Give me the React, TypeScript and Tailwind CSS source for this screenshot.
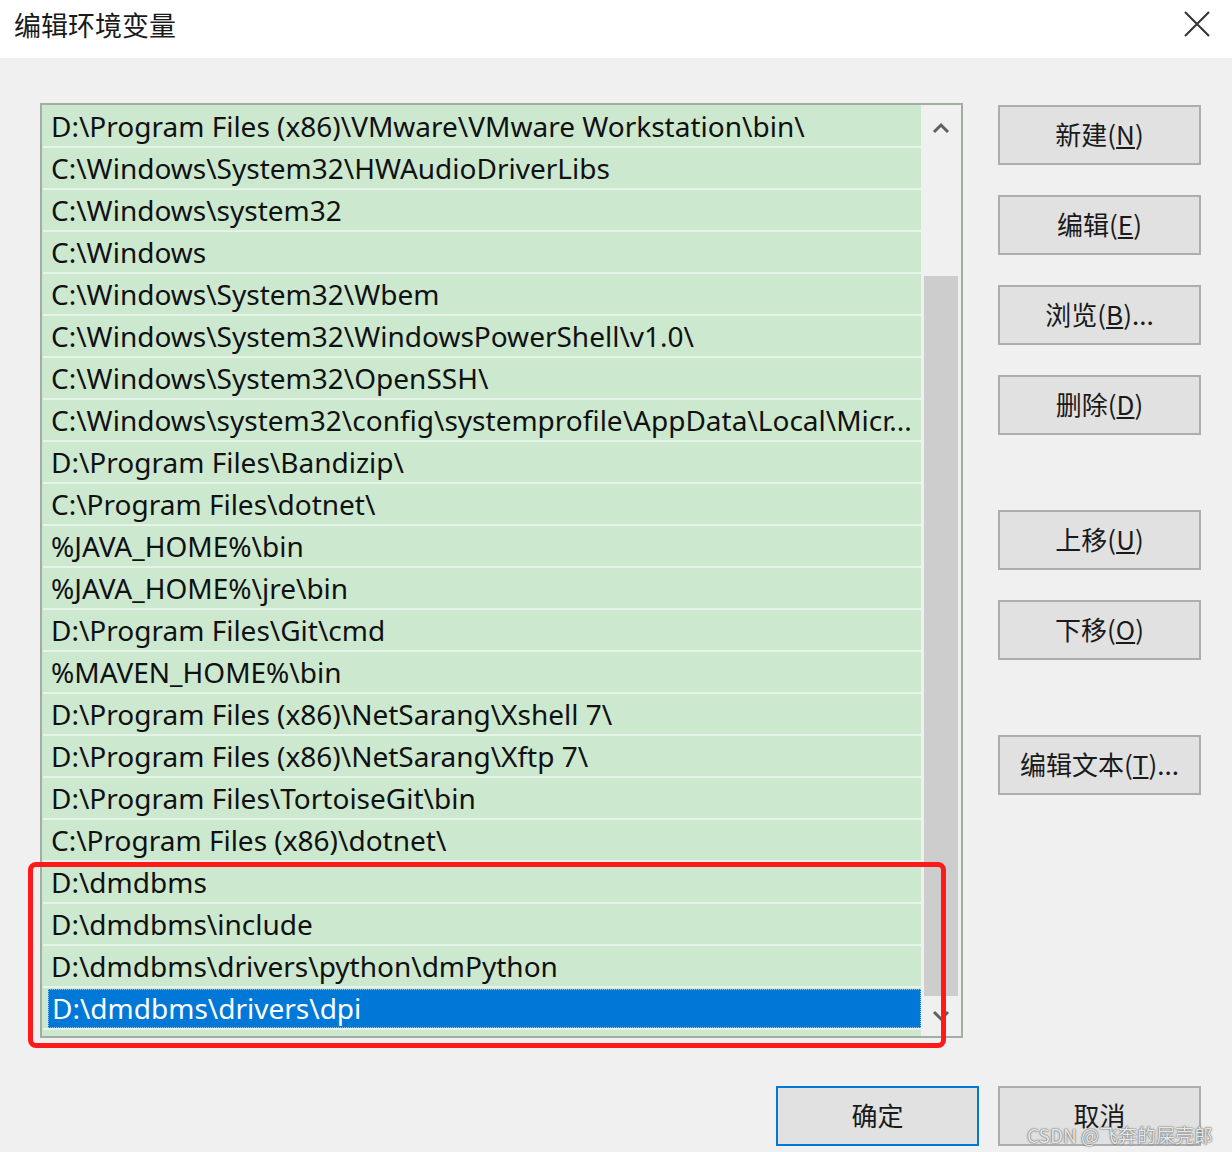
import { ReactNode } from "react";

const paths = [
  "D:\\Program Files (x86)\\VMware\\VMware Workstation\\bin\\",
  "C:\\Windows\\System32\\HWAudioDriverLibs",
  "C:\\Windows\\system32",
  "C:\\Windows",
  "C:\\Windows\\System32\\Wbem",
  "C:\\Windows\\System32\\WindowsPowerShell\\v1.0\\",
  "C:\\Windows\\System32\\OpenSSH\\",
  "C:\\Windows\\system32\\config\\systemprofile\\AppData\\Local\\Micr...",
  "D:\\Program Files\\Bandizip\\",
  "C:\\Program Files\\dotnet\\",
  "%JAVA_HOME%\\bin",
  "%JAVA_HOME%\\jre\\bin",
  "D:\\Program Files\\Git\\cmd",
  "%MAVEN_HOME%\\bin",
  "D:\\Program Files (x86)\\NetSarang\\Xshell 7\\",
  "D:\\Program Files (x86)\\NetSarang\\Xftp 7\\",
  "D:\\Program Files\\TortoiseGit\\bin",
  "C:\\Program Files (x86)\\dotnet\\",
  "D:\\dmdbms",
  "D:\\dmdbms\\include",
  "D:\\dmdbms\\drivers\\python\\dmPython",
  "D:\\dmdbms\\drivers\\dpi",
];

function DlgButton({ children, primary = false }: { children: ReactNode; primary?: boolean }) {
  return (
    <div
      className={
        "w-[203px] h-[60px] flex items-center justify-center pb-[3px] bg-[#e1e1e1] text-[26px] text-[#1a1a1a] border-2 " +
        (primary ? "border-[#0078d7]" : "border-[#adadad]")
      }
    >
      {children}
    </div>
  );
}

export default function App() {
  const last = paths.length - 1;
  return (
    <div
      className="relative w-[1232px] h-[1152px] overflow-hidden bg-[#f0f0f0]"
      style={{ fontFamily: '"Noto Sans", "Noto Sans CJK SC", sans-serif' }}
    >
      {/* title bar */}
      <div className="h-[58px] bg-white flex items-center justify-between pl-[14px] pr-[22px] pb-[10px]">
        <span className="text-[27px] text-[#1a1a1a] leading-none" style={{ fontFamily: '"Noto Sans CJK SC", sans-serif' }}>
          编辑环境变量
        </span>
        <svg width="26" height="26" viewBox="0 0 26 26">
          <path d="M1 1L25 25M25 1L1 25" stroke="#333" strokeWidth="2" />
        </svg>
      </div>

      <div className="flex pl-[40px] pt-[45px]">
        {/* list box */}
        <div className="w-[923px] h-[935px] border-2 border-[#a3ada3] bg-[#cce8cf] flex">
          <div className="w-[879px] pl-[1px] pt-[1px]">
            {paths.map((p, i) => (
              <div key={i} className="h-[42px] border-b-2 border-[#e6f3e8] flex items-center">
                {i === last ? (
                  <div className="ml-[5px] h-[39px] w-full bg-[#0078d7] border border-dotted border-[#9cc4e8] flex items-center text-white text-[28px] pl-[3px] leading-none">
                    {p}
                  </div>
                ) : (
                  <span className="pl-[8px] text-[28px] text-[#111] leading-none whitespace-nowrap">{p}</span>
                )}
              </div>
            ))}
          </div>
          {/* scrollbar */}
          <div className="w-[40px] bg-[#f0f0f0] flex flex-col items-center">
            <div className="h-[45px] flex items-center justify-center">
              <svg width="18" height="12" viewBox="0 0 18 12">
                <path d="M2 10L9 3L16 10" fill="none" stroke="#606060" strokeWidth="3" />
              </svg>
            </div>
            <div className="mt-[126px] h-[720px] w-[34px] bg-[#cdcdcd]" />
            <div className="h-[40px] flex items-center justify-center">
              <svg width="18" height="12" viewBox="0 0 18 12">
                <path d="M2 2L9 9L16 2" fill="none" stroke="#606060" strokeWidth="3" />
              </svg>
            </div>
          </div>
        </div>

        {/* side buttons */}
        <div className="ml-[35px] pt-[2px] flex flex-col" style={{ fontFamily: '"Noto Sans CJK SC", sans-serif' }}>
          <DlgButton>新建(<u>N</u>)</DlgButton>
          <div className="h-[30px]" />
          <DlgButton>编辑(<u>E</u>)</DlgButton>
          <div className="h-[30px]" />
          <DlgButton>浏览(<u>B</u>)...</DlgButton>
          <div className="h-[30px]" />
          <DlgButton>删除(<u>D</u>)</DlgButton>
          <div className="h-[75px]" />
          <DlgButton>上移(<u>U</u>)</DlgButton>
          <div className="h-[30px]" />
          <DlgButton>下移(<u>O</u>)</DlgButton>
          <div className="h-[75px]" />
          <DlgButton>编辑文本(<u>T</u>)...</DlgButton>
        </div>
      </div>

      {/* bottom buttons */}
      <div className="flex justify-end gap-[19px] pr-[31px] mt-[48px]" style={{ fontFamily: '"Noto Sans CJK SC", sans-serif' }}>
        <DlgButton primary>确定</DlgButton>
        <DlgButton>取消</DlgButton>
      </div>

      {/* red annotation box */}
      <div className="absolute left-[28px] top-[862px] w-[918px] h-[186px] border-[5px] border-[#ff1a1a] rounded-[8px] pointer-events-none" />

      {/* watermark */}
      <div
        className="absolute left-[1027px] top-[1121px] text-[19px] text-white/85 whitespace-nowrap [text-shadow:0_0_2px_#666,0_0_1px_#444]"
        style={{ fontFamily: '"Noto Sans CJK SC", sans-serif' }}
      >
        CSDN @飞奔的屎壳郎
      </div>
    </div>
  );
}
